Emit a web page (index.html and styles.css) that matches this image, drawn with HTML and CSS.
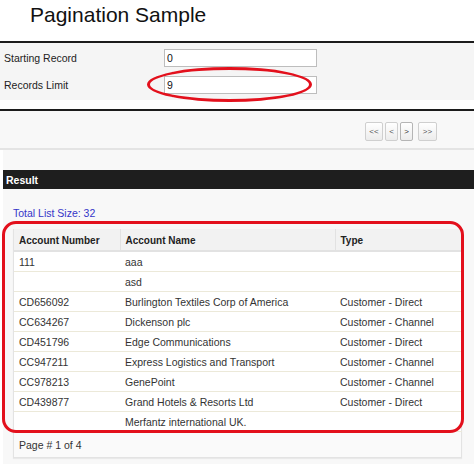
FILE: index.html
```html
<!DOCTYPE html>
<html>
<head>
<meta charset="utf-8">
<link rel="stylesheet" href="styles.css">
</head>
<body>
<h1 class="title">Pagination Sample</h1>
<div class="criteria">
  <div class="criteria-body">
    <label class="lbl">Starting Record</label>
    <input class="fld" type="text" value="0">
    <label class="lbl">Records Limit</label>
    <input class="fld" type="text" value="9">
  </div>
</div>
<div class="results">
  <div class="pager">
    <button class="pbtn w-wide">&lt;&lt;</button>
    <button class="pbtn w-narrow">&lt;</button>
    <button class="pbtn w-narrow active">&gt;</button>
    <button class="pbtn w-wide last">&gt;&gt;</button>
  </div>
  <div class="spacer"></div>
  <div class="result-bar">Result</div>
  <div class="total">Total List Size: 32</div>
  <div class="panel">
    <table class="grid">
      <colgroup><col class="c1"><col class="c2"><col class="c3"></colgroup>
      <thead>
        <tr><th>Account Number</th><th>Account Name</th><th>Type</th></tr>
      </thead>
      <tbody>
        <tr><td>111</td><td>aaa</td><td></td></tr>
        <tr><td></td><td>asd</td><td></td></tr>
        <tr><td>CD656092</td><td>Burlington Textiles Corp of America</td><td>Customer - Direct</td></tr>
        <tr><td>CC634267</td><td>Dickenson plc</td><td>Customer - Channel</td></tr>
        <tr><td>CD451796</td><td>Edge Communications</td><td>Customer - Direct</td></tr>
        <tr><td>CC947211</td><td>Express Logistics and Transport</td><td>Customer - Channel</td></tr>
        <tr><td>CC978213</td><td>GenePoint</td><td>Customer - Channel</td></tr>
        <tr><td>CD439877</td><td>Grand Hotels &amp; Resorts Ltd</td><td>Customer - Direct</td></tr>
        <tr><td></td><td>Merfantz international UK.</td><td></td></tr>
      </tbody>
    </table>
    <div class="footer">Page # 1 of 4</div>
  </div>
</div>
<div class="mark-ellipse"></div>
<div class="mark-rect"></div>
</body>
</html>
```
FILE: styles.css
```css
html, body {
  margin: 0;
  padding: 0;
  background: #ffffff;
}
body {
  position: relative;
  width: 474px;
  height: 466px;
  overflow: hidden;
  font-family: "Liberation Sans", Arial, sans-serif;
  font-size: 10.5px;
  color: #333;
}
.title {
  margin: 0;
  height: 41px;
  padding-left: 30px;
  font-size: 21px;
  font-weight: normal;
  line-height: 30px;
  color: #111;
}
.criteria {
  border-top: 2px solid #1c1c1c;
  border-bottom: 2px solid #1c1c1c;
  padding-bottom: 9px;
}
.criteria-body {
  background: #f5f5f5;
  display: grid;
  grid-template-columns: 160px 153px;
  grid-auto-rows: 18px;
  row-gap: 9px;
  align-items: center;
  padding: 6px 0 6px 4px;
}
.lbl {
  color: #222;
  font-size: 10.5px;
}
.fld {
  box-sizing: border-box;
  width: 153px;
  height: 18px;
  margin: 0;
  border: 1px solid #bdbdbd;
  background: #fff;
  padding: 0 2px;
  font-family: "Liberation Sans", Arial, sans-serif;
  font-size: 10.5px;
  color: #111;
  outline: none;
}
.results {
  margin-left: 3px;
  background: #f8f8f8;
  padding-bottom: 6px;
}
.pager {
  margin-left: -3px;
  height: 39px;
  box-sizing: border-box;
  padding: 11px 37px 0 0;
  display: flex;
  justify-content: flex-end;
  align-items: flex-start;
  border-bottom: 2px solid #e4e4e4;
  background: #f8f8f8;
}
.pbtn {
  box-sizing: border-box;
  height: 19px;
  margin: 0 2px 0 0;
  padding: 0;
  border: 1px solid #cfcfcf;
  border-radius: 2px;
  background: linear-gradient(#ffffff, #ececec);
  font-family: "Liberation Sans", Arial, sans-serif;
  font-size: 8px;
  color: #555;
  line-height: 17px;
}
.w-wide { width: 18px; }
.w-narrow { width: 13px; }
.active {
  border-color: #b5b5b5;
  margin-right: 5px;
  color: #333;
}
.last { width: 19px; margin-right: 0; }
.spacer {
  height: 20px;
}
.result-bar {
  height: 19px;
  background: #1e1e1e;
  color: #fff;
  font-weight: bold;
  font-size: 10.5px;
  line-height: 20px;
  padding-left: 3px;
}
.total {
  margin-top: 17px;
  padding-left: 10px;
  height: 14px;
  line-height: 14px;
  color: #3535c8;
  font-size: 10.5px;
}
.panel {
  margin: 9px 12px 0 10px;
  background: #fff;
  border: 1px solid #e3e3e3;
  border-top: none;
  box-shadow: 0 1px 1px rgba(0,0,0,0.06);
}
.grid {
  width: 100%;
  border-collapse: collapse;
  table-layout: fixed;
}
.c1 { width: 106px; }
.c2 { width: 215px; }
.c3 { width: 127px; }
.grid th {
  height: 22px;
  box-sizing: border-box;
  background: #f2f2f2;
  border-bottom: 2px solid #e2e2e2;
  border-left: 1px solid #e2e2e2;
  text-align: left;
  padding: 2px 5px 0;
  font-size: 10px;
  font-weight: bold;
  color: #222;
}
.grid th:first-child { border-left: none; }
.grid td {
  height: 20px;
  box-sizing: border-box;
  padding: 1px 5px 0;
  border-bottom: 1px solid #ece9d9;
  white-space: nowrap;
  overflow: hidden;
  font-size: 10.5px;
  color: #333;
}
.footer {
  height: 25px;
  line-height: 27px;
  padding-left: 5px;
  background: #fafafa;
  color: #333;
  font-size: 10.5px;
}
.mark-ellipse {
  position: absolute;
  left: 147px;
  top: 67px;
  width: 165px;
  height: 35px;
  box-sizing: border-box;
  border: 3px solid #e3101c;
  border-radius: 50%;
}
.mark-rect {
  position: absolute;
  left: 2px;
  top: 221px;
  width: 462px;
  height: 212px;
  box-sizing: border-box;
  border: 3px solid #e3101c;
  border-radius: 14px;
}
```
